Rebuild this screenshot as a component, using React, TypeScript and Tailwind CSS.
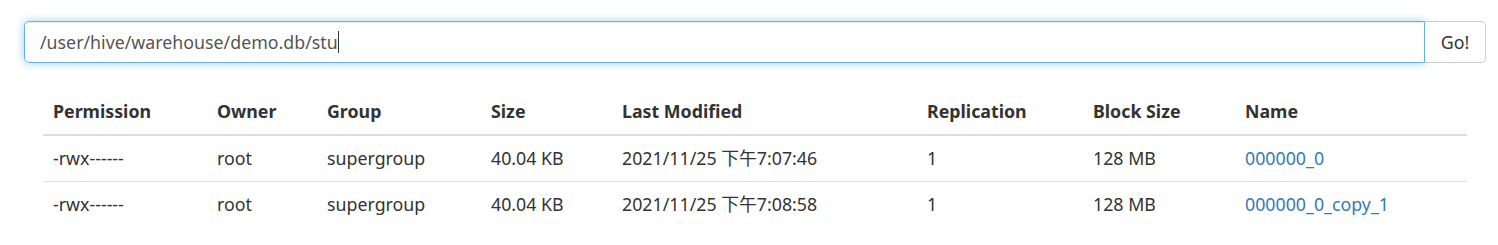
import React from "react";

const cols = [
  { label: "Permission", w: "w-[164px]" },
  { label: "Owner", w: "w-[110px]" },
  { label: "Group", w: "w-[164px]" },
  { label: "Size", w: "w-[131px]" },
  { label: "Last Modified", w: "w-[305px]" },
  { label: "Replication", w: "w-[166px]" },
  { label: "Block Size", w: "w-[152px]" },
  { label: "Name", w: "w-[232px]" },
];

const rows = [
  ["-rwx------", "root", "supergroup", "40.04 KB", "2021/11/25 下午7:07:46", "1", "128 MB", "000000_0"],
  ["-rwx------", "root", "supergroup", "40.04 KB", "2021/11/25 下午7:08:58", "1", "128 MB", "000000_0_copy_1"],
];

export default function App() {
  return (
    <div
      className="w-[1498px] h-[245px] bg-white text-[#333] text-[17.8px] leading-[25px] overflow-hidden"
      style={{ fontFamily: '"Noto Sans", "Noto Sans CJK SC", sans-serif' }}
    >
      <div className="pt-[21px] pl-[24px] pr-[12px]">
        <div className="flex h-[42px]">
          <div className="flex-1 flex items-center border border-[#66afe9] rounded-l-[5px] px-[15px] shadow-[inset_0_1px_1px_rgba(0,0,0,0.075),0_0_10px_rgba(102,175,233,0.6)] text-[#555]">
            <span>/user/hive/warehouse/demo.db/stu</span>
            <span className="inline-block w-[1px] h-[22px] bg-[#333]" />
          </div>
          <button className="w-[61px] border border-l-0 border-[#ccc] rounded-r-[5px] bg-white text-[#333] text-center">
            Go!
          </button>
        </div>
      </div>
      <div className="pl-[43px] pt-[26px]">
        <table className="w-[1424px] table-fixed border-collapse">
          <thead>
            <tr className="border-b-[2px] border-[#ddd]">
              {cols.map((c) => (
                <th key={c.label} className={`${c.w} text-left font-bold px-[10px] py-[10px]`}>
                  {c.label}
                </th>
              ))}
            </tr>
          </thead>
          <tbody>
            {rows.map((r, i) => (
              <tr key={i} className={i === 0 ? "border-b border-[#ddd]" : ""}>
                {r.map((v, j) => (
                  <td key={j} className="px-[10px] py-[10px] whitespace-nowrap">
                    {j === 7 ? <a className="text-[#337ab7]">{v}</a> : v}
                  </td>
                ))}
              </tr>
            ))}
          </tbody>
        </table>
      </div>
    </div>
  );
}
